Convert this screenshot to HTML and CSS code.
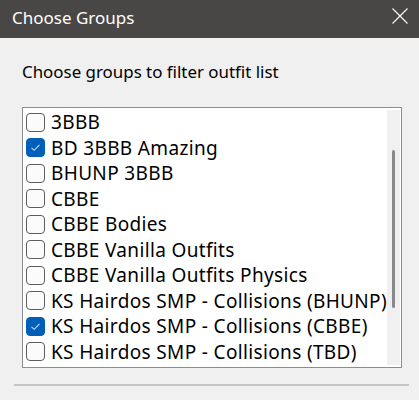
FILE: index.html
```html
<!DOCTYPE html>
<html>
<head>
<meta charset="utf-8">
<link rel="stylesheet" href="styles.css">
</head>
<body>
<div class="window">
  <div class="titlebar">
    <span class="title">Choose Groups</span>
    <svg class="close" width="16" height="16" viewBox="0 0 16 16"><path d="M0.5 0.5 L15.5 15.5 M15.5 0.5 L0.5 15.5" stroke="#ffffff" stroke-width="1.1" fill="none"/></svg>
  </div>
  <div class="content">
    <div class="label">Choose groups to filter outfit list</div>
    <div class="listbox">
      <div class="items">
        <div class="row"><span class="cb"></span><span class="txt">3BBB</span></div>
        <div class="row"><span class="cb checked"><svg viewBox="0 0 19 19" width="19" height="19"><path d="M5.5 9.8 L8.2 12.3 L13.5 6.8" stroke="#c8dcf2" stroke-width="1.1" fill="none"/></svg></span><span class="txt">BD 3BBB Amazing</span></div>
        <div class="row"><span class="cb"></span><span class="txt">BHUNP 3BBB</span></div>
        <div class="row"><span class="cb"></span><span class="txt">CBBE</span></div>
        <div class="row"><span class="cb"></span><span class="txt">CBBE Bodies</span></div>
        <div class="row"><span class="cb"></span><span class="txt">CBBE Vanilla Outfits</span></div>
        <div class="row"><span class="cb"></span><span class="txt">CBBE Vanilla Outfits Physics</span></div>
        <div class="row"><span class="cb"></span><span class="txt">KS Hairdos SMP - Collisions (BHUNP)</span></div>
        <div class="row"><span class="cb checked"><svg viewBox="0 0 19 19" width="19" height="19"><path d="M5.5 9.8 L8.2 12.3 L13.5 6.8" stroke="#c8dcf2" stroke-width="1.1" fill="none"/></svg></span><span class="txt">KS Hairdos SMP - Collisions (CBBE)</span></div>
        <div class="row"><span class="cb"></span><span class="txt">KS Hairdos SMP - Collisions (TBD)</span></div>
      </div>
      <div class="scrollbar"><div class="thumb"></div></div>
    </div>
    <div class="separator"></div>
  </div>
</div>
</body>
</html>
```
FILE: styles.css
```css
html, body {
  margin: 0;
  padding: 0;
}
body {
  background: #f0f0f0;
  font-family: "Noto Sans", "Open Sans", sans-serif;
  color: #000;
}
.window {
  width: 419px;
  height: 400px;
  overflow: hidden;
  background: #f0f0f0;
}
.titlebar {
  height: 38px;
  background: #494745;
  display: flex;
  align-items: center;
  justify-content: space-between;
  padding: 0 10px 0 12px;
  box-sizing: border-box;
}
.title {
  color: #ffffff;
  font-size: 17px;
  line-height: 20px;
  margin-top: -3px;
}
.close {
  display: block;
  margin-top: -7px;
  margin-right: 1px;
}
.content {
  padding: 24px 0 0 22px;
}
.label {
  font-size: 16.9px;
  line-height: 20px;
  height: 20px;
  margin-bottom: 25px;
  white-space: nowrap;
}
.listbox {
  width: 380px;
  height: 261px;
  box-sizing: border-box;
  border: 1px solid #8a8d93;
  background: #ffffff;
  display: flex;
  padding: 2px 0 2px 0;
}
.items {
  flex: 1;
  display: flex;
  flex-direction: column;
}
.row {
  height: 25.5px;
  display: flex;
  align-items: center;
  padding-left: 3px;
}
.cb {
  width: 19px;
  height: 19px;
  box-sizing: border-box;
  border: 1px solid #5d5d5d;
  border-radius: 4px;
  background: #fbfbfb;
  flex: none;
  position: relative;
  margin-top: -1px;
}
.cb.checked {
  background: #005fb8;
  border-color: #005fb8;
}
.cb svg {
  position: absolute;
  left: -1px;
  top: -1px;
}
.txt {
  margin-left: 6px;
  font-size: 19px;
  letter-spacing: 0.35px;
  line-height: 25px;
  white-space: nowrap;
}
.scrollbar {
  width: 24px;
  background: #f0f0f0;
  display: flex;
  justify-content: center;
  padding-top: 40px;
  box-sizing: border-box;
  margin-right: 1px;
}
.thumb {
  width: 3px;
  height: 158px;
  background: #8a8a8a;
  border-radius: 2px;
}
.separator {
  margin-top: 16px;
  margin-left: -8px;
  width: 395px;
  height: 2px;
  background: #c6c6c6;
}
```
